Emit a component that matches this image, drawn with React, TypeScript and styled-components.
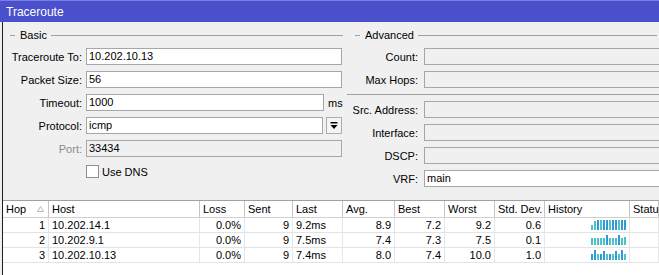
import React from 'react';
import styled, { createGlobalStyle } from 'styled-components';

const Global = createGlobalStyle`
  html, body { margin: 0; padding: 0; background: #f0f0f0; }
  body { font-family: "Liberation Sans", Arial, sans-serif; font-size: 11px; color: #000; }
`;

const Window = styled.div`
  width: 659px;
  height: 275px;
  overflow: hidden;
  display: flex;
  flex-direction: column;
  background: #f0f0f0;
`;

const TitleBar = styled.div`
  height: 22px;
  flex: none;
  box-sizing: border-box;
  background: #4a4fcc;
  border-top: 1px solid #7a7de2;
  color: #fff;
  font-size: 12px;
  padding-left: 6px;
  display: flex;
  align-items: center;
`;

const Body = styled.div`
  flex: 1;
  display: flex;
  flex-direction: column;
  margin-left: 2px;
  border-left: 1px solid #1e1e1e;
  min-height: 0;
`;

const Form = styled.div`
  height: 178px;
  flex: none;
  display: grid;
  grid-template-columns: 342px 1fr;
  overflow: hidden;
`;

const Group = styled.div<{ $pad: number }>`
  padding-left: ${p => p.$pad}px;
  padding-top: 6px;
  display: flex;
  flex-direction: column;
  min-width: 0;
`;

const Legend = styled.div<{ $indent: number }>`
  height: 14px;
  display: flex;
  align-items: center;
  margin-left: ${p => p.$indent}px;
  margin-right: 2px;
`;

const Dash = styled.span<{ $grow?: boolean }>`
  height: 1px;
  background: #a0a0a0;
  width: 5px;
  flex: ${p => (p.$grow ? '1' : 'none')};
`;

const LegendText = styled.span`
  padding: 0 4px 0 5px;
  line-height: 14px;
`;

const Rows = styled.div`
  margin-top: 6px;
  display: flex;
  flex-direction: column;
  gap: 6px;
`;

const Row = styled.div<{ $label: number; $gap: number }>`
  display: grid;
  grid-template-columns: ${p => p.$label}px auto;
  column-gap: ${p => p.$gap}px;
  align-items: center;
  height: 17px;
`;

const Label = styled.span<{ $disabled?: boolean }>`
  text-align: right;
  white-space: nowrap;
  color: ${p => (p.$disabled ? '#8a8a8a' : '#000')};
`;

const Field = styled.div<{ $w: number; $disabled?: boolean }>`
  width: ${p => p.$w}px;
  height: 17px;
  box-sizing: border-box;
  border: 1px solid #a6a6a6;
  background: ${p => (p.$disabled ? '#f0f0f0' : '#fff')};
  padding-left: 2px;
  line-height: 15px;
  white-space: nowrap;
  overflow: hidden;
`;

const Inline = styled.div<{ $gap: number }>`
  display: flex;
  align-items: center;
  gap: ${p => p.$gap}px;
`;

const DropButton = styled.div`
  width: 16px;
  height: 17px;
  box-sizing: border-box;
  border: 1px solid #adadad;
  background: #f4f4f4;
  display: flex;
  align-items: center;
  justify-content: center;
`;

const Check = styled.span`
  width: 13px;
  height: 13px;
  box-sizing: border-box;
  border: 1px solid #8f8f8f;
  background: #fff;
  display: inline-block;
`;

const Separator = styled.div`
  height: 1px;
  background: #a0a0a0;
  margin-left: 2px;
`;

const Table = styled.div`
  flex: 1;
  background: #fff;
  border-top: 1px solid #a0a0a0;
  overflow: hidden;
`;

const cols = '46px 151px 45px 48px 50px 52px 50px 50px 50px 85px 1fr';

const HeadRow = styled.div`
  display: grid;
  grid-template-columns: ${cols};
  height: 17px;
  box-sizing: border-box;
  border-bottom: 1px solid #d0d0d0;
`;

const HeadCell = styled.div`
  border-right: 1px solid #c4c4c4;
  padding-left: 3px;
  line-height: 16px;
  white-space: nowrap;
  overflow: hidden;
  display: flex;
  align-items: center;
  justify-content: space-between;
  padding-right: 4px;
`;

const DataRow = styled.div`
  display: grid;
  grid-template-columns: ${cols};
  height: 15px;
  box-sizing: border-box;
  border-bottom: 1px solid #e3e3e3;
`;

const Cell = styled.div<{ $right?: boolean }>`
  border-right: 1px solid #e6e6e6;
  line-height: 14px;
  white-space: nowrap;
  overflow: hidden;
  text-align: ${p => (p.$right ? 'right' : 'left')};
  padding: ${p => (p.$right ? '0 3px 0 0' : '0 0 0 3px')};
`;

const HistCell = styled.div`
  border-right: 1px solid #e6e6e6;
  display: flex;
  justify-content: flex-end;
  align-items: flex-end;
  gap: 1px;
  padding: 0 3px 2px 0;
`;

const Bar = styled.span<{ $c: string }>`
  width: 2px;
  background: ${p => p.$c};
  flex: none;
`;

const T = '#4cc4c6';
const B = '#2f9ad6';

type RowData = {
  hop: string; host: string; loss: string; sent: string; last: string;
  avg: string; best: string; worst: string; sd: string; hist: [number, string][];
};

const rows: RowData[] = [
  {
    hop: '1', host: '10.202.14.1', loss: '0.0%', sent: '9', last: '9.2ms', avg: '8.9', best: '7.2', worst: '9.2', sd: '0.6',
    hist: [[5, T], [9, T], [10, B], [10, T], [10, B], [10, B], [10, T], [10, B], [10, B], [10, T], [10, B], [10, B]],
  },
  {
    hop: '2', host: '10.202.9.1', loss: '0.0%', sent: '9', last: '7.5ms', avg: '7.4', best: '7.3', worst: '7.5', sd: '0.1',
    hist: [[7, T], [7, T], [7, T], [7, T], [7, T], [10, B], [7, T], [7, T], [7, T], [10, B], [7, T], [8, T]],
  },
  {
    hop: '3', host: '10.202.10.13', loss: '0.0%', sent: '9', last: '7.4ms', avg: '8.0', best: '7.4', worst: '10.0', sd: '1.0',
    hist: [[6, B], [10, B], [6, T], [6, B], [9, B], [6, T], [6, B], [6, T], [9, B], [6, T], [10, B], [6, T]],
  },
];

const SortArrow = () => (
  <svg width="7" height="6" viewBox="0 0 7 6">
    <polygon points="3.5,0.5 6.5,5.5 0.5,5.5" fill="none" stroke="#b8b8b8" strokeWidth="1" />
  </svg>
);

const DropIcon = () => (
  <svg width="8" height="8" viewBox="0 0 8 8">
    <rect x="0.5" y="0" width="7" height="1.5" fill="#000" />
    <polygon points="0.5,3 7.5,3 4,7" fill="#000" />
  </svg>
);

export default function App() {
  return (
    <Window>
      <Global />
      <TitleBar>Traceroute</TitleBar>
      <Body>
        <Form>
          <Group $pad={5}>
            <Legend $indent={2}>
              <Dash />
              <LegendText>Basic</LegendText>
              <Dash $grow />
            </Legend>
            <Rows>
              <Row $label={74} $gap={4}>
                <Label>Traceroute To:</Label>
                <Field $w={256}>10.202.10.13</Field>
              </Row>
              <Row $label={74} $gap={4}>
                <Label>Packet Size:</Label>
                <Field $w={256}>56</Field>
              </Row>
              <Row $label={74} $gap={4}>
                <Label>Timeout:</Label>
                <Inline $gap={4}>
                  <Field $w={238}>1000</Field>
                  <span>ms</span>
                </Inline>
              </Row>
              <Row $label={74} $gap={4}>
                <Label>Protocol:</Label>
                <Inline $gap={3}>
                  <Field $w={237}>icmp</Field>
                  <DropButton><DropIcon /></DropButton>
                </Inline>
              </Row>
              <Row $label={74} $gap={4}>
                <Label $disabled>Port:</Label>
                <Field $w={256} $disabled>33434</Field>
              </Row>
              <Row $label={74} $gap={4}>
                <span />
                <Inline $gap={3}>
                  <Check />
                  <span>Use DNS</span>
                </Inline>
              </Row>
            </Rows>
          </Group>
          <Group $pad={0}>
            <Legend $indent={10}>
              <Dash />
              <LegendText>Advanced</LegendText>
              <Dash $grow />
            </Legend>
            <Rows>
              <Row $label={73} $gap={6}>
                <Label>Count:</Label>
                <Field $w={260} $disabled />
              </Row>
              <Row $label={73} $gap={6}>
                <Label>Max Hops:</Label>
                <Field $w={260} $disabled />
              </Row>
              <Separator />
              <Row $label={73} $gap={6}>
                <Label>Src. Address:</Label>
                <Field $w={260} $disabled />
              </Row>
              <Row $label={73} $gap={6}>
                <Label>Interface:</Label>
                <Field $w={260} $disabled />
              </Row>
              <Row $label={73} $gap={6}>
                <Label>DSCP:</Label>
                <Field $w={260} $disabled />
              </Row>
              <Row $label={73} $gap={6}>
                <Label>VRF:</Label>
                <Field $w={260}>main</Field>
              </Row>
            </Rows>
          </Group>
        </Form>
        <Table>
          <HeadRow>
            <HeadCell>Hop<SortArrow /></HeadCell>
            <HeadCell>Host</HeadCell>
            <HeadCell>Loss</HeadCell>
            <HeadCell>Sent</HeadCell>
            <HeadCell>Last</HeadCell>
            <HeadCell>Avg.</HeadCell>
            <HeadCell>Best</HeadCell>
            <HeadCell>Worst</HeadCell>
            <HeadCell>Std. Dev.</HeadCell>
            <HeadCell>History</HeadCell>
            <HeadCell>Status</HeadCell>
          </HeadRow>
          {rows.map(r => (
            <DataRow key={r.hop}>
              <Cell $right>{r.hop}</Cell>
              <Cell>{r.host}</Cell>
              <Cell $right>{r.loss}</Cell>
              <Cell $right>{r.sent}</Cell>
              <Cell>{r.last}</Cell>
              <Cell $right>{r.avg}</Cell>
              <Cell $right>{r.best}</Cell>
              <Cell $right>{r.worst}</Cell>
              <Cell $right>{r.sd}</Cell>
              <HistCell>
                {r.hist.map(([h, c], i) => (
                  <Bar key={i} $c={c} style={{ height: h }} />
                ))}
              </HistCell>
              <Cell />
            </DataRow>
          ))}
        </Table>
      </Body>
    </Window>
  );
}
